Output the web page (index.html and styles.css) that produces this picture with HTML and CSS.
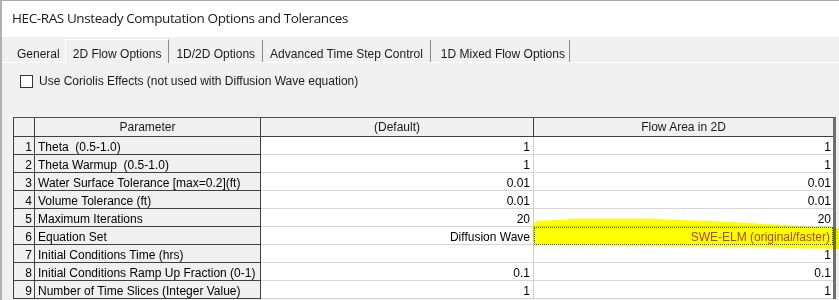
FILE: index.html
```html
<!DOCTYPE html>
<html>
<head>
<meta charset="utf-8">
<title>HEC-RAS Unsteady Computation Options and Tolerances</title>
<link rel="stylesheet" href="styles.css">
</head>
<body>
<div class="window">
  <div class="titlebar">HEC-RAS Unsteady Computation Options and Tolerances</div>
  <div class="tabs">
    <div class="tab">General</div>
    <div class="tab active">2D Flow Options</div>
    <div class="tab">1D/2D Options</div>
    <div class="tab">Advanced Time Step Control</div>
    <div class="tab wide">1D Mixed Flow Options</div>
  </div>
  <div class="panel">
    <div class="check"><span class="box"></span><span>Use Coriolis Effects (not used with Diffusion Wave equation)</span></div>
    <div class="grid">
      <div class="hd num"></div>
      <div class="hd">Parameter</div>
      <div class="hd">(Default)</div>
      <div class="hd last">Flow Area in 2D</div>

      <div class="rh num">1</div><div class="rh">Theta&nbsp; (0.5-1.0)</div><div class="c">1</div><div class="c last">1</div>
      <div class="rh num">2</div><div class="rh">Theta Warmup&nbsp; (0.5-1.0)</div><div class="c">1</div><div class="c last">1</div>
      <div class="rh num">3</div><div class="rh">Water Surface Tolerance [max=0.2](ft)</div><div class="c">0.01</div><div class="c last">0.01</div>
      <div class="rh num">4</div><div class="rh">Volume Tolerance (ft)</div><div class="c">0.01</div><div class="c last">0.01</div>
      <div class="rh num">5</div><div class="rh">Maximum Iterations</div><div class="c">20</div><div class="c last">20</div>
      <div class="rh num">6</div><div class="rh">Equation Set</div><div class="c">Diffusion Wave</div><div class="c last sel">SWE-ELM (original/faster)</div>
      <div class="rh num">7</div><div class="rh">Initial Conditions Time (hrs)</div><div class="c"></div><div class="c last">1</div>
      <div class="rh num">8</div><div class="rh">Initial Conditions Ramp Up Fraction (0-1)</div><div class="c">0.1</div><div class="c last">0.1</div>
      <div class="rh num">9</div><div class="rh">Number of Time Slices (Integer Value)</div><div class="c">1</div><div class="c last">1</div>
    </div>
  </div>
</div>
</body>
</html>
```
FILE: styles.css
```css
* { box-sizing: border-box; }
html, body { margin: 0; padding: 0; }
body {
  width: 839px;
  height: 300px;
  overflow: hidden;
  background: #f0f0f0;
  font-family: "Liberation Sans", Arial, sans-serif;
  font-size: 12px;
  color: #000;
}
.window {
  height: 300px;
  border-left: 2px solid #b0b0b0;
  border-top: 1px solid #a8a8a8;
  background: #f0f0f0;
}
.titlebar {
  height: 36px;
  background: #fff;
  padding: 8px 0 0 10px;
  font-family: "Open Sans", "Noto Sans", sans-serif;
  font-size: 13.5px;
  letter-spacing: -0.4px;
  line-height: 19px;
  color: #1a1a1a;
}
.tabs {
  height: 26px;
  display: flex;
  align-items: flex-end;
  padding-left: 10px;
  border-bottom: 1px solid #ffffff;
}
.tab {
  height: 22px;
  padding: 6px 7px 0 7px;
  line-height: 16px;
  border-right: 1px solid #8a8a8a;
  color: #1a1a1a;
  white-space: nowrap;
}
.tab:first-child { padding-left: 5px; padding-right: 5px; border-right: none; }
.tab.active {
  height: 24px;
  padding: 7px 7px 0 7px;
  border-left: 1px solid #ffffff;
  border-top: 1px solid #ffffff;
  margin-bottom: -1px;
  background: #f0f0f0;
  line-height: 15px;
}
.tab.wide { padding-left: 10px; padding-right: 4px; }
.panel {
  padding: 11px 0 0 11px;
}
.check {
  display: flex;
  align-items: center;
  gap: 6px;
  margin-left: 7px;
  height: 14px;
  line-height: 14px;
  color: #1a1a1a;
}
.box {
  width: 13px;
  height: 13px;
  border: 1px solid #333;
  background: #fff;
}
.grid {
  margin-top: 29px;
  display: grid;
  grid-template-columns: 21px 226px 273px 299px;
  grid-template-rows: 19px repeat(9, 18px);
  width: 823px;
  border-left: 1px solid #404040;
  border-top: 1px solid #505050;
  border-right: 3px solid #6e6e6e;
}
.grid > div {
  white-space: nowrap;
  overflow: hidden;
  line-height: 16px;
  padding: 2px 3px 0 3px;
}
.grid > .hd { padding-top: 1px; }
.hd {
  background: #f0f0f0;
  border-right: 1px solid #404040;
  border-bottom: 1px solid #404040;
  text-align: center;
  color: #1a1a1a;
}
.hd.last { border-right: none; }
.rh {
  background: #f0f0f0;
  border-right: 1px solid #404040;
  border-bottom: 1px solid #404040;
}
.num { text-align: right; padding-right: 2px !important; }
.c {
  background: #fff;
  border-right: 1px solid #cfcfcf;
  border-bottom: 1px solid #d6d6d6;
  text-align: right;
}
.c.last { border-right: none; padding-right: 2px; }
.grid > .c.sel {
  position: relative;
  overflow: visible;
  background: #ffff00;
  border: 1px dotted #2c6e6e;
  color: #b0400a;
  padding-top: 1px;
}
.c.sel::after {
  content: "";
  position: absolute;
  left: -2px;
  top: -9px;
  width: 312px;
  height: 31px;
  background: #ffff00;
  mix-blend-mode: multiply;
  clip-path: polygon(0 7px, 3px 2px, 40px 0, 120px 0, 200px 3px, 312px 10px, 312px 30px, 200px 28px, 100px 27px, 3px 26px, 0 22px);
  pointer-events: none;
}
```
